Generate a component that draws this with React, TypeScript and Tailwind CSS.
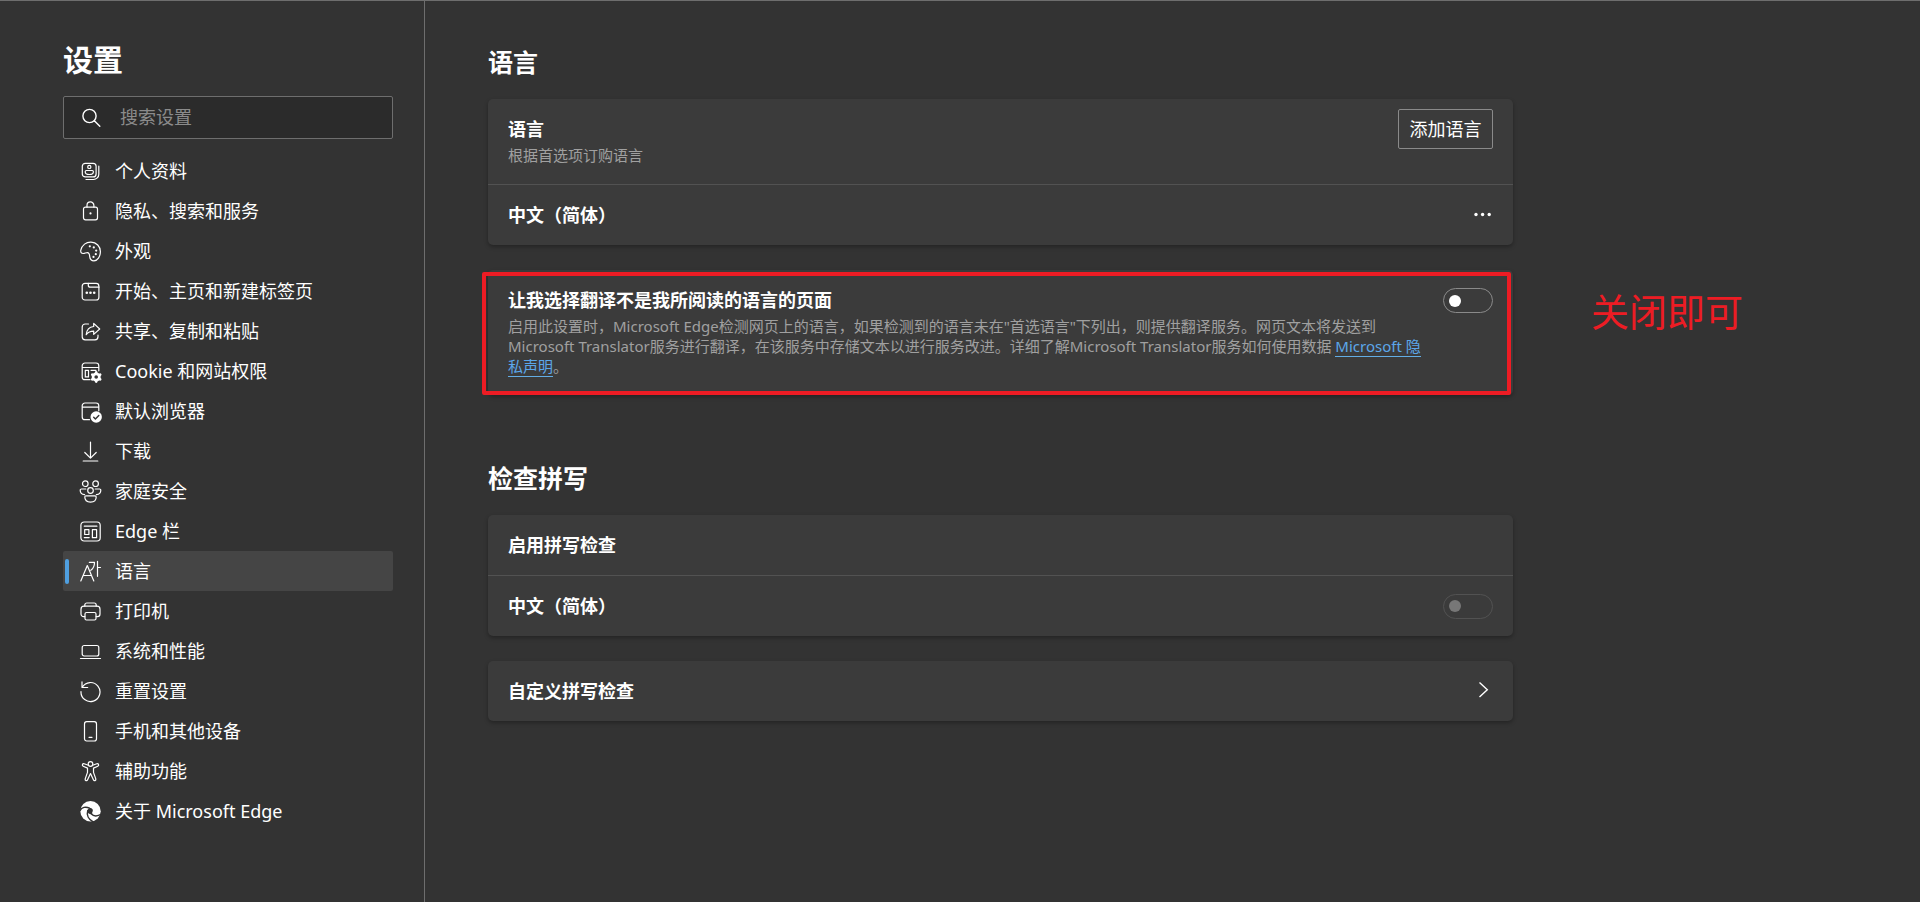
import { useState } from "react";
import type { ReactNode } from "react";

type NavItem = {
  label: string;
  icon: ReactNode;
};

const NAV_ITEMS: NavItem[] = [
  {
    label: "个人资料",
    icon: (
      <>
        <rect x="3.3" y="4.3" width="13.8" height="13.6" rx="3" />
        <path d="M19.8 7.2v8a5.3 5.3 0 0 1-5.3 5.3H7" />
        <circle cx="10.3" cy="7.9" r="1.6" />
        <path d="M7.4 11.5h5.8a1.2 1.2 0 0 1 1.2 1.2c0 1.8-1.7 2.8-4.1 2.8s-4.1-1-4.1-2.8a1.2 1.2 0 0 1 1.2-1.2z" />
      </>
    ),
  },
  {
    label: "隐私、搜索和服务",
    icon: (
      <>
        <rect x="4.5" y="8.2" width="14" height="12.6" rx="2" />
        <path d="M8 8.2V6.4a3.4 3.4 0 0 1 6.9 0v1.8" />
        <circle cx="11.5" cy="14.4" r="1.1" fill="currentColor" stroke="none" />
      </>
    ),
  },
  {
    label: "外观",
    icon: (
      <>
        <path d="M1.8 11.2C3 6 7.2 2.9 12 3.1c5.3.2 9.5 4.3 9.4 9.7-.1 4.8-2.9 9-6.4 9-2.6 0-4-1.6-4.3-4.2-.2-2.3-.7-4.2-2.7-4-1.3.1-2.3.9-3.8.9-1.9 0-2.8-1.3-2.4-3.3z" />
        <g fill="currentColor" stroke="none">
          <circle cx="10.8" cy="7.3" r="1.1" />
          <circle cx="14.8" cy="8.4" r="1.1" />
          <circle cx="17.2" cy="11.6" r="1.1" />
          <circle cx="16.8" cy="15.2" r="1.1" />
          <circle cx="14.5" cy="17.9" r="1.1" />
        </g>
      </>
    ),
  },
  {
    label: "开始、主页和新建标签页",
    icon: (
      <>
        <rect x="3.2" y="4.4" width="16.7" height="16.6" rx="2.8" />
        <path d="M9.3 4.4v1.8a2 2 0 0 0 2 2h8.6" />
        <g fill="currentColor" stroke="none">
          <circle cx="7.8" cy="13.7" r="1.3" />
          <circle cx="11.5" cy="13.7" r="1.3" />
          <circle cx="15.2" cy="13.7" r="1.3" />
        </g>
      </>
    ),
  },
  {
    label: "共享、复制和粘贴",
    icon: (
      <>
        <path d="M9.5 5H6.2a3 3 0 0 0-3 3v9.8a3 3 0 0 0 3 3H16a3 3 0 0 0 3-3v-1.6" />
        <path d="M14.7 4.4l6 5.6-6 5.4v-3.2c-3.4 0-5.6 1-7.5 3.5.4-4.7 3.1-7.8 7.5-8.2z" />
      </>
    ),
  },
  {
    label: "Cookie 和网站权限",
    icon: (
      <>
        <path d="M11 20.7H6a2.8 2.8 0 0 1-2.8-2.8V6.8A2.8 2.8 0 0 1 6 4h11a2.8 2.8 0 0 1 2.8 2.8v5M3.2 8.5h16.6" />
        <rect x="6.3" y="11.3" width="3.2" height="6.6" />
        <path d="M12 11.3h5" />
        <circle cx="17.2" cy="18" r="3" strokeWidth="3" />
        <path
          d="M17.2 13.4v9.2M13.2 15.7l8 4.6M13.2 20.3l8-4.6"
          strokeWidth="2.6"
        />
        <circle cx="17.2" cy="18" r="1.8" fill="#333333" stroke="none" />
      </>
    ),
  },
  {
    label: "默认浏览器",
    icon: (
      <>
        <path d="M10.5 20.7H6a2.8 2.8 0 0 1-2.8-2.8V6.8A2.8 2.8 0 0 1 6 4h11a2.8 2.8 0 0 1 2.8 2.8v5M3.2 8.2h16.6" />
        <circle cx="17.2" cy="18" r="5.7" fill="currentColor" stroke="none" />
        <path d="M14.7 18.3l1.7 1.7 3.4-3.6" stroke="#333333" strokeWidth="1.4" />
      </>
    ),
  },
  {
    label: "下载",
    icon: <path d="M11.5 3v16M5.8 13.5l5.7 5.7 5.7-5.7M4.2 22h14.6" />,
  },
  {
    label: "家庭安全",
    icon: (
      <>
        <circle cx="6.3" cy="4.7" r="2.8" />
        <circle cx="16.6" cy="4.7" r="2.8" />
        <circle cx="11.5" cy="11.5" r="2.8" />
        <path d="M6.8 10H2.4a1.2 1.2 0 0 0-1.2 1.2c0 2.4 1.6 4.2 4.4 4.4M16.2 10h4.4a1.2 1.2 0 0 1 1.2 1.2c0 2.4-1.6 4.2-4.4 4.4" />
        <path d="M7 16.8h9a1.2 1.2 0 0 1 1.2 1.2c0 3-2.2 5.1-5.7 5.1S5.8 21 5.8 18A1.2 1.2 0 0 1 7 16.8z" />
      </>
    ),
  },
  {
    label: "Edge 栏",
    icon: (
      <>
        <rect x="1.9" y="3" width="19.3" height="19" rx="3.2" />
        <path d="M5.3 7.2h12.6M5.3 18.6h4.9" />
        <rect x="5.7" y="10.7" width="4.2" height="4.8" />
        <rect x="13.4" y="10.7" width="4.2" height="8" />
      </>
    ),
  },
  {
    label: "语言",
    icon: (
      <>
        <path d="M1.8 22L8.3 6.5 14.8 22M4.2 16.5h8.2" />
        <path d="M10.3 3.3h5.2c0 3.7-1.2 6.3-3.7 8M18.5 2.3v15M18.5 8.5h3" />
      </>
    ),
  },
  {
    label: "打印机",
    icon: (
      <>
        <path d="M5.8 7.2V6a2 2 0 0 1 2-2h7.4a2 2 0 0 1 2 2v1.2" />
        <path d="M5.8 17.6H4.6A2.6 2.6 0 0 1 2 15v-4.8a3 3 0 0 1 3-3h13a3 3 0 0 1 3 3V15a2.6 2.6 0 0 1-2.6 2.6h-1.2" />
        <rect x="6" y="13.5" width="11" height="7.5" rx="1.5" />
      </>
    ),
  },
  {
    label: "系统和性能",
    icon: (
      <>
        <rect x="3.2" y="6.5" width="16.6" height="10.5" rx="2" />
        <path d="M1.5 19.5h20" />
      </>
    ),
  },
  {
    label: "重置设置",
    icon: <path d="M3 2.8v5.7h5.7M3.3 8.2a9.500 9.500 0 1 1-1.300 4.300" />,
  },
  {
    label: "手机和其他设备",
    icon: (
      <>
        <rect x="5.5" y="2.7" width="12" height="19.3" rx="2.2" />
        <path d="M10 18.3h3" />
      </>
    ),
  },
  {
    label: "辅助功能",
    icon: (
      <>
        <circle cx="11.5" cy="5" r="2.3" />
        <path d="M9.3 6.3L5.2 4.8c-1.7-.6-2.6 1.7-1 2.4l4.3 1.9v4.3l-2.3 6.5c-.5 1.7 1.7 2.5 2.4.9l2.9-6.3 2.9 6.3c.7 1.600 2.900.8 2.400-.9l-2.300-6.500V9.100l4.300-1.900c1.600-.7.700-3-1-2.400l-4.100 1.500" />
      </>
    ),
  },
  {
    label: "关于 Microsoft Edge",
    icon: (
      <>
        <circle cx="11.5" cy="12.3" r="10.2" fill="currentColor" stroke="none" />
        <g stroke="#333333" strokeWidth="1.5">
          <path d="M.8 11.8c1.900-3.600 6-4.700 9.700-2.600" />
          <path d="M8.800 11.500c-1.400 4.300.6 8.800 5.400 11.300" />
          <path d="M12.200 14.800c2.100 2.400 6.200 2.600 10.300.4" />
        </g>
        <path
          d="M8.300 12.600c.1-2.300 1.500-3.900 3.400-3.600 1.700.3 2.600 1.900 2 3.300-.4 1-.8 1.500-.4 2.700-1.700.6-4.700-.3-5-2.400z"
          fill="#333333"
          stroke="none"
        />
      </>
    ),
  },
];

function NavIcon({ children }: { children: ReactNode }) {
  return (
    <svg
      viewBox="0 0 24 24"
      className="size-6 shrink-0"
      fill="none"
      stroke="currentColor"
      strokeWidth="1.2"
      strokeLinecap="round"
      strokeLinejoin="round"
      aria-hidden="true"
    >
      {children}
    </svg>
  );
}

function Toggle({ label, disabled = false }: { label: string; disabled?: boolean }) {
  const [on, setOn] = useState(false);

  return (
    <input
      type="checkbox"
      role="switch"
      aria-label={label}
      checked={on}
      disabled={disabled}
      onChange={(e) => setOn(e.target.checked)}
      className="flex h-[25px] w-[50px] shrink-0 appearance-none items-center rounded-full border border-[#8a8a8a] px-[5px] before:size-3 before:rounded-full before:bg-white checked:justify-end checked:bg-[#4f9fe0] disabled:border-[#525252] disabled:before:bg-[#777777]"
    />
  );
}

function Sidebar() {
  const [active, setActive] = useState("语言");

  return (
    <aside className="w-[425px] shrink-0 border-r border-[#6e6e6e] pl-[63px] pr-[31px]">
      <h1 className="pt-[38px] text-[30px] leading-[42px] font-bold">设置</h1>

      <label className="mt-[15px] flex h-[43px] items-center gap-4 rounded-xs border border-[#6e6e6e] bg-[#2b2b2b] pl-4">
        <svg
          viewBox="0 0 24 24"
          className="size-6 shrink-0"
          fill="none"
          stroke="currentColor"
          strokeWidth="1.4"
          strokeLinecap="round"
          aria-hidden="true"
        >
          <circle cx="9.5" cy="10" r="6.6" />
          <path d="M14.3 14.8l5.5 5.5" />
        </svg>
        <input
          type="text"
          placeholder="搜索设置"
          aria-label="搜索设置"
          className="min-w-0 flex-1 bg-transparent text-[18px] outline-none placeholder:text-[#8b8b8b]"
        />
      </label>

      <nav className="mt-3">
        {NAV_ITEMS.map((item) => (
          <a
            key={item.label}
            href="#"
            onClick={() => setActive(item.label)}
            className={`relative flex h-10 items-center gap-3 rounded-xs pl-4 text-[18px] ${
              item.label === active ? "bg-[#454545]" : ""
            }`}
          >
            {item.label === active && (
              <span className="absolute top-2 left-[2px] h-[25px] w-1 rounded-xs bg-[#4f9fe0]" />
            )}
            <NavIcon>{item.icon}</NavIcon>
            {item.label}
          </a>
        ))}
      </nav>
    </aside>
  );
}

const CARD = "rounded-[5px] bg-[#3b3b3b] shadow-[0_2px_4px_rgba(0,0,0,0.3)]";

export default function App() {
  return (
    <div className="flex min-h-screen border-t border-[#6e6e6e] bg-[#333333] font-['Noto_Sans','Noto_Sans_CJK_SC',sans-serif] text-white">
      <Sidebar />

      <main className="min-w-0 flex-1 px-[63px]">
        <div className="max-w-[1025px]">
          <h2 className="pt-[43px] text-[25px] leading-9 font-bold">语言</h2>

          <section className={`mt-[19px] ${CARD}`}>
            <div className="flex items-start justify-between border-b border-[#525252] pt-[10px] pr-5 pb-[19px] pl-5">
              <div className="pt-2">
                <h3 className="text-[18px] leading-6 font-bold">语言</h3>
                <p className="mt-1 text-[15px] leading-5 text-[#a0a0a0]">根据首选项订购语言</p>
              </div>
              <button
                type="button"
                className="h-10 w-[95px] rounded-xs border border-[#8a8a8a] text-[18px]"
              >
                添加语言
              </button>
            </div>
            <div className="flex h-[60px] items-center justify-between px-5">
              <h3 className="text-[18px] leading-6 font-bold">中文（简体）</h3>
              <button type="button" aria-label="更多操作">
                <svg viewBox="0 0 20 20" className="size-5" fill="currentColor">
                  <circle cx="3" cy="9.5" r="1.7" />
                  <circle cx="9.6" cy="9.5" r="1.7" />
                  <circle cx="16.2" cy="9.5" r="1.7" />
                </svg>
              </button>
            </div>
          </section>

          <section className={`relative mt-[25px] ${CARD}`}>
            <div className="flex items-start justify-between gap-3 px-5 pt-[18px] pb-[19px]">
              <div className="max-w-[922px]">
                <h3 className="text-[18px] leading-6 font-bold">
                  让我选择翻译不是我所阅读的语言的页面
                </h3>
                <p className="mt-1 text-[15px] leading-5 text-[#a0a0a0]">
                  启用此设置时，Microsoft Edge检测网页上的语言，如果检测到的语言未在"首选语言"下列出，则提供翻译服务。网页文本将发送到Microsoft
                  Translator服务进行翻译，在该服务中存储文本以进行服务改进。详细了解Microsoft
                  Translator服务如何使用数据{" "}
                  <a href="#" className="border-b border-[#63ade5] text-[#5ba7ea]">
                    Microsoft 隐私声明
                  </a>
                  。
                </p>
              </div>
              <Toggle label="让我选择翻译不是我所阅读的语言的页面" />
            </div>
            <div className="pointer-events-none absolute top-[2px] right-[2px] bottom-0 -left-[6px] rounded-xs border-4 border-[#ed1c24]" />
            <p className="absolute top-4 left-full ml-[78px] text-[38px] leading-[50px] whitespace-nowrap text-[#ed1c24]">
              关闭即可
            </p>
          </section>

          <h2 className="mt-[65px] text-[25px] leading-9 font-bold">检查拼写</h2>

          <section className={`mt-[19px] ${CARD}`}>
            <div className="flex h-[61px] items-center border-b border-[#525252] px-5">
              <h3 className="text-[18px] leading-6 font-bold">启用拼写检查</h3>
            </div>
            <div className="flex h-[60px] items-center justify-between px-5">
              <h3 className="text-[18px] leading-6 font-bold">中文（简体）</h3>
              <Toggle label="中文（简体）" disabled />
            </div>
          </section>

          <button
            type="button"
            className={`mt-[25px] flex h-[60px] w-full items-center justify-between px-5 text-left ${CARD}`}
          >
            <span className="text-[18px] leading-6 font-bold">自定义拼写检查</span>
            <svg
              viewBox="0 0 20 20"
              className="size-5"
              fill="none"
              stroke="currentColor"
              strokeWidth="1.4"
              aria-hidden="true"
            >
              <path d="M6.5 1.5l7.8 7.3-7.8 7.3" />
            </svg>
          </button>
        </div>
      </main>
    </div>
  );
}
